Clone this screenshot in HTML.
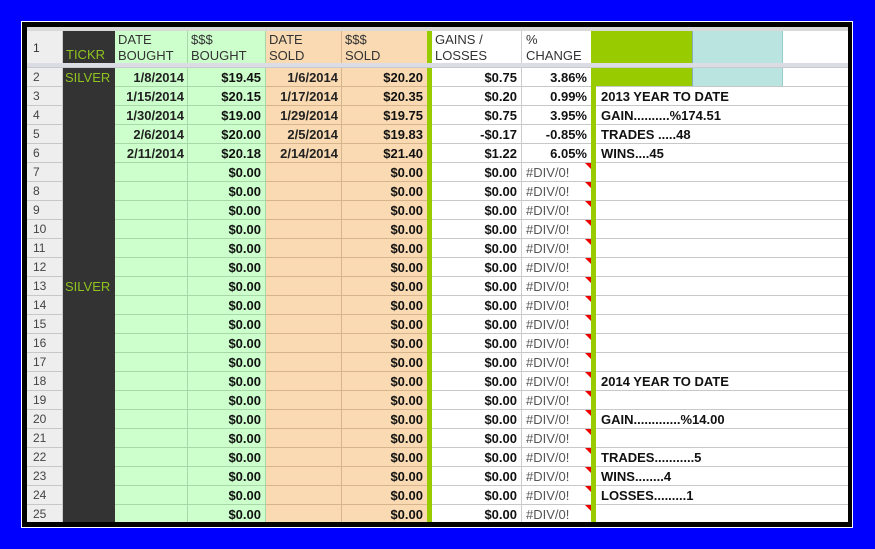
<!DOCTYPE html>
<html><head><style>
*{box-sizing:border-box;margin:0;padding:0}
body{width:875px;height:549px;background:#0000ff;position:relative;overflow:hidden;font-family:"Liberation Sans",Arial,sans-serif}
#wl{position:absolute;left:21px;top:21px;width:832px;height:507px;border:1px solid #fff;background:#000}
#sh{position:absolute;left:27px;top:27px;width:821px;height:495px;background:#fff;overflow:hidden}
.top{height:4px;background:#d8d8d8}
.r{display:flex;height:19px}
.r>div{height:19px;border-bottom:1px solid #c8c8c8;font-size:13px;line-height:19px;white-space:nowrap;overflow:hidden;position:relative}
.n{width:36px;background:#eeeeee;color:#444;font-size:12px!important;padding-left:6px;border-right:1px solid #ccc}
.t{width:52px;background:#333;color:#8fc31f;border-bottom-color:#333!important;padding-left:2px}
.db{width:73px;background:#ccffcc;border-right:1px solid #a8d8a8;border-bottom-color:#a8d8a8!important;text-align:right;padding-right:3px;font-weight:bold;color:#222}
.b{width:78px;background:#ccffcc;border-right:1px solid #a8d8a8;border-bottom-color:#a8d8a8!important;text-align:right;padding-right:4px;font-weight:bold;color:#111}
.ds{width:76px;background:#f9dab2;border-right:1px solid #d6b48c;border-bottom-color:#d6b48c!important;text-align:right;padding-right:3px;font-weight:bold;color:#222}
.s{width:85px;background:#f9dab2;border-bottom-color:#d6b48c!important;text-align:right;padding-right:4px;font-weight:bold;color:#111}
.g{width:5px;background:#99cc00;border-bottom:none!important}
.gl{width:90px;text-align:right;padding-right:4px;font-weight:bold;color:#111;border-right:1px solid #ccc}
.pc{width:69px;padding-left:4px;color:#555}
.pc.v{text-align:right;padding-right:4px;padding-left:0;font-weight:bold;color:#111}
.x{width:252px;padding-left:5px;font-weight:bold;color:#111}
.tri:after{content:"";position:absolute;right:0;top:0;border-top:6px solid #e00;border-left:6px solid transparent}
.h>div{height:32px;line-height:16px;font-size:13px;color:#333;font-weight:normal;text-align:left;padding:1px 0 0 3px;border-bottom:none}
.h .n{line-height:32px;padding-left:6px}
.h .t{color:#8fc31f;padding-top:16px}
.sep{height:5px;background:#dcdce4;border-bottom:1px solid #c8c8d0}
.gb{display:inline-block;width:97px;height:19px;background:#99cc00;border-right:1px solid #8ab}
.tb{display:inline-block;width:90px;height:19px;background:#b9e4e0;border-right:1px solid #9cc}
</style></head><body>
<div id="wl"></div>
<div id="sh">
<div class="top"></div>
<div class="r h" style="height:32px">
<div class="n">1</div><div class="t">TICKR</div><div class="db">DATE<br>BOUGHT</div><div class="b">$$$<br>BOUGHT</div><div class="ds">DATE<br>SOLD</div><div class="s">$$$<br>SOLD</div><div class="g"></div><div class="gl">GAINS /<br>LOSSES</div><div class="pc" style="padding-left:4px">%<br>CHANGE</div><div class="g"></div><div class="x" style="padding:0"><span class="gb" style="height:32px"></span><span class="tb" style="height:32px"></span></div>
</div>
<div class="sep"></div>
<div class="r"><div class="n">2</div><div class="t">SILVER</div><div class="db">1/8/2014</div><div class="b">$19.45</div><div class="ds">1/6/2014</div><div class="s">$20.20</div><div class="g"></div><div class="gl">$0.75</div><div class="pc v">3.86%</div><div class="g"></div><div class="x" style="padding:0"><span class="gb"></span><span class="tb"></span></div></div>
<div class="r"><div class="n">3</div><div class="t"></div><div class="db">1/15/2014</div><div class="b">$20.15</div><div class="ds">1/17/2014</div><div class="s">$20.35</div><div class="g"></div><div class="gl">$0.20</div><div class="pc v">0.99%</div><div class="g"></div><div class="x">2013 YEAR TO DATE</div></div>
<div class="r"><div class="n">4</div><div class="t"></div><div class="db">1/30/2014</div><div class="b">$19.00</div><div class="ds">1/29/2014</div><div class="s">$19.75</div><div class="g"></div><div class="gl">$0.75</div><div class="pc v">3.95%</div><div class="g"></div><div class="x">GAIN..........%174.51</div></div>
<div class="r"><div class="n">5</div><div class="t"></div><div class="db">2/6/2014</div><div class="b">$20.00</div><div class="ds">2/5/2014</div><div class="s">$19.83</div><div class="g"></div><div class="gl">-$0.17</div><div class="pc v">-0.85%</div><div class="g"></div><div class="x">TRADES .....48</div></div>
<div class="r"><div class="n">6</div><div class="t"></div><div class="db">2/11/2014</div><div class="b">$20.18</div><div class="ds">2/14/2014</div><div class="s">$21.40</div><div class="g"></div><div class="gl">$1.22</div><div class="pc v">6.05%</div><div class="g"></div><div class="x">WINS....45</div></div>
<div class="r"><div class="n">7</div><div class="t"></div><div class="db"></div><div class="b">$0.00</div><div class="ds"></div><div class="s">$0.00</div><div class="g"></div><div class="gl">$0.00</div><div class="pc tri">#DIV/0!</div><div class="g"></div><div class="x"></div></div>
<div class="r"><div class="n">8</div><div class="t"></div><div class="db"></div><div class="b">$0.00</div><div class="ds"></div><div class="s">$0.00</div><div class="g"></div><div class="gl">$0.00</div><div class="pc tri">#DIV/0!</div><div class="g"></div><div class="x"></div></div>
<div class="r"><div class="n">9</div><div class="t"></div><div class="db"></div><div class="b">$0.00</div><div class="ds"></div><div class="s">$0.00</div><div class="g"></div><div class="gl">$0.00</div><div class="pc tri">#DIV/0!</div><div class="g"></div><div class="x"></div></div>
<div class="r"><div class="n">10</div><div class="t"></div><div class="db"></div><div class="b">$0.00</div><div class="ds"></div><div class="s">$0.00</div><div class="g"></div><div class="gl">$0.00</div><div class="pc tri">#DIV/0!</div><div class="g"></div><div class="x"></div></div>
<div class="r"><div class="n">11</div><div class="t"></div><div class="db"></div><div class="b">$0.00</div><div class="ds"></div><div class="s">$0.00</div><div class="g"></div><div class="gl">$0.00</div><div class="pc tri">#DIV/0!</div><div class="g"></div><div class="x"></div></div>
<div class="r"><div class="n">12</div><div class="t"></div><div class="db"></div><div class="b">$0.00</div><div class="ds"></div><div class="s">$0.00</div><div class="g"></div><div class="gl">$0.00</div><div class="pc tri">#DIV/0!</div><div class="g"></div><div class="x"></div></div>
<div class="r"><div class="n">13</div><div class="t">SILVER</div><div class="db"></div><div class="b">$0.00</div><div class="ds"></div><div class="s">$0.00</div><div class="g"></div><div class="gl">$0.00</div><div class="pc tri">#DIV/0!</div><div class="g"></div><div class="x"></div></div>
<div class="r"><div class="n">14</div><div class="t"></div><div class="db"></div><div class="b">$0.00</div><div class="ds"></div><div class="s">$0.00</div><div class="g"></div><div class="gl">$0.00</div><div class="pc tri">#DIV/0!</div><div class="g"></div><div class="x"></div></div>
<div class="r"><div class="n">15</div><div class="t"></div><div class="db"></div><div class="b">$0.00</div><div class="ds"></div><div class="s">$0.00</div><div class="g"></div><div class="gl">$0.00</div><div class="pc tri">#DIV/0!</div><div class="g"></div><div class="x"></div></div>
<div class="r"><div class="n">16</div><div class="t"></div><div class="db"></div><div class="b">$0.00</div><div class="ds"></div><div class="s">$0.00</div><div class="g"></div><div class="gl">$0.00</div><div class="pc tri">#DIV/0!</div><div class="g"></div><div class="x"></div></div>
<div class="r"><div class="n">17</div><div class="t"></div><div class="db"></div><div class="b">$0.00</div><div class="ds"></div><div class="s">$0.00</div><div class="g"></div><div class="gl">$0.00</div><div class="pc tri">#DIV/0!</div><div class="g"></div><div class="x"></div></div>
<div class="r"><div class="n">18</div><div class="t"></div><div class="db"></div><div class="b">$0.00</div><div class="ds"></div><div class="s">$0.00</div><div class="g"></div><div class="gl">$0.00</div><div class="pc tri">#DIV/0!</div><div class="g"></div><div class="x">2014 YEAR TO DATE</div></div>
<div class="r"><div class="n">19</div><div class="t"></div><div class="db"></div><div class="b">$0.00</div><div class="ds"></div><div class="s">$0.00</div><div class="g"></div><div class="gl">$0.00</div><div class="pc tri">#DIV/0!</div><div class="g"></div><div class="x"></div></div>
<div class="r"><div class="n">20</div><div class="t"></div><div class="db"></div><div class="b">$0.00</div><div class="ds"></div><div class="s">$0.00</div><div class="g"></div><div class="gl">$0.00</div><div class="pc tri">#DIV/0!</div><div class="g"></div><div class="x">GAIN.............%14.00</div></div>
<div class="r"><div class="n">21</div><div class="t"></div><div class="db"></div><div class="b">$0.00</div><div class="ds"></div><div class="s">$0.00</div><div class="g"></div><div class="gl">$0.00</div><div class="pc tri">#DIV/0!</div><div class="g"></div><div class="x"></div></div>
<div class="r"><div class="n">22</div><div class="t"></div><div class="db"></div><div class="b">$0.00</div><div class="ds"></div><div class="s">$0.00</div><div class="g"></div><div class="gl">$0.00</div><div class="pc tri">#DIV/0!</div><div class="g"></div><div class="x">TRADES...........5</div></div>
<div class="r"><div class="n">23</div><div class="t"></div><div class="db"></div><div class="b">$0.00</div><div class="ds"></div><div class="s">$0.00</div><div class="g"></div><div class="gl">$0.00</div><div class="pc tri">#DIV/0!</div><div class="g"></div><div class="x">WINS........4</div></div>
<div class="r"><div class="n">24</div><div class="t"></div><div class="db"></div><div class="b">$0.00</div><div class="ds"></div><div class="s">$0.00</div><div class="g"></div><div class="gl">$0.00</div><div class="pc tri">#DIV/0!</div><div class="g"></div><div class="x">LOSSES.........1</div></div>
<div class="r"><div class="n">25</div><div class="t"></div><div class="db"></div><div class="b">$0.00</div><div class="ds"></div><div class="s">$0.00</div><div class="g"></div><div class="gl">$0.00</div><div class="pc tri">#DIV/0!</div><div class="g"></div><div class="x"></div></div>
</div>
</body></html>
